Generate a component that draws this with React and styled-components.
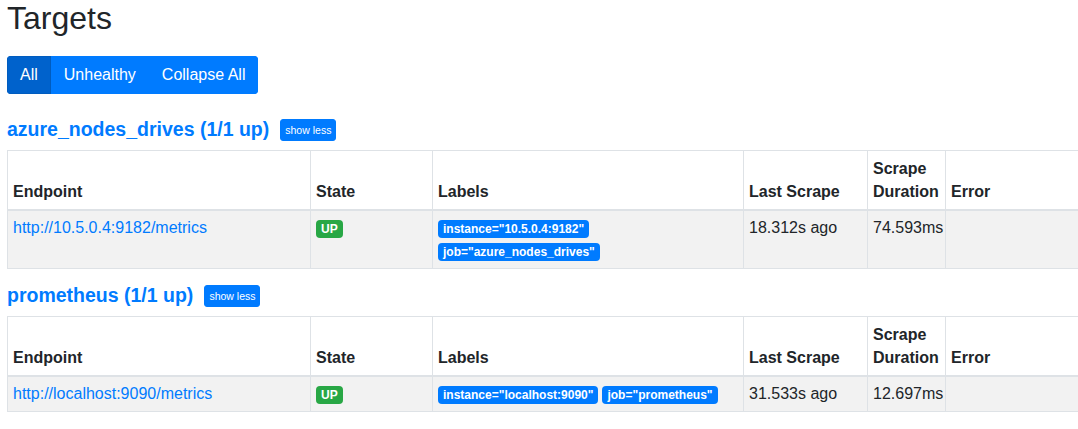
import React from "react";
import styled, { createGlobalStyle } from "styled-components";

const GlobalStyle = createGlobalStyle`
  html, body {
    margin: 0;
    padding: 0;
    background: #fff;
    overflow: hidden;
  }
  body {
    font-family: "Liberation Sans", Arial, sans-serif;
    font-size: 16px;
    line-height: 1.5;
    color: #212529;
  }
`;

const Page = styled.div`
  padding: 0 7px;
  width: 1200px;
`;

const Title = styled.h2`
  margin: 0 0 21px;
  padding-top: 1px;
  font-size: 32px;
  font-weight: 500;
  line-height: 34px;
  color: #212529;
`;

const ButtonGroup = styled.div`
  display: inline-flex;
  border-radius: 4px;
  overflow: hidden;
  margin-bottom: 24px;
`;

const GroupButton = styled.button`
  font: inherit;
  font-size: 16px;
  line-height: 24px;
  color: #fff;
  background: ${(p) => (p.$active ? "#0062cc" : "#007bff")};
  border: 1px solid ${(p) => (p.$active ? "#005cbf" : "#007bff")};
  padding: 6px 12px;
  height: 38px;
  cursor: pointer;
`;

const PoolHeader = styled.div`
  display: flex;
  align-items: center;
  gap: 11px;
  height: 24px;
  margin-bottom: 8px;
`;

const PoolName = styled.a`
  font-size: 19.5px;
  font-weight: 700;
  color: #007bff;
  text-decoration: none;
`;

const SmallButton = styled.button`
  font: inherit;
  font-size: 10.5px;
  line-height: 16px;
  color: #fff;
  background: #007bff;
  border: 1px solid #007bff;
  border-radius: 3px;
  padding: 2px 4px;
  cursor: pointer;
`;

const Table = styled.table`
  border-collapse: collapse;
  table-layout: fixed;
  width: 1160px;
  margin-bottom: 15px;
`;

const Col = styled.col`
  width: ${(p) => p.$w}px;
`;

const Th = styled.th`
  text-align: left;
  vertical-align: bottom;
  font-weight: 700;
  padding: 6px 5px 6px;
  border: 1px solid #dee2e6;
  border-bottom: 2px solid #dee2e6;
  line-height: 23px;
`;

const Row = styled.tr`
  background: ${(p) => (p.$striped ? "#f2f2f2" : "#fff")};
`;

const Td = styled.td`
  vertical-align: top;
  padding: 5px 5px 5px;
  border: 1px solid #dee2e6;
  line-height: 23px;
`;

const Endpoint = styled.a`
  color: #007bff;
  text-decoration: none;
`;

const Badge = styled.span`
  display: inline-block;
  font-size: 12px;
  font-weight: 700;
  line-height: 12px;
  padding: 3px 5px;
  border-radius: 4px;
  color: #fff;
  background: ${(p) => (p.$variant === "success" ? "#28a745" : "#007bff")};
  white-space: nowrap;
`;

const StateBadge = styled(Badge)`
  margin-top: 4px;
  vertical-align: top;
`;

const Labels = styled.div`
  display: flex;
  flex-wrap: wrap;
  gap: 5px 4px;
  padding: 4px 0 2px;
`;

const columns = [303, 122, 311, 124, 78, 222];

const pools = [
  {
    name: "azure_nodes_drives",
    endpoint: "http://10.5.0.4:9182/metrics",
    labels: ['instance="10.5.0.4:9182"', 'job="azure_nodes_drives"'],
    lastScrape: "18.312s ago",
    duration: "74.593ms",
  },
  {
    name: "prometheus",
    endpoint: "http://localhost:9090/metrics",
    labels: ['instance="localhost:9090"', 'job="prometheus"'],
    lastScrape: "31.533s ago",
    duration: "12.697ms",
  },
];

function Pool({ pool }) {
  return (
    <>
      <PoolHeader>
        <PoolName href="#">{pool.name} (1/1 up)</PoolName>
        <SmallButton>show less</SmallButton>
      </PoolHeader>
      <Table>
        <colgroup>
          {columns.map((w, i) => (
            <Col key={i} $w={w} />
          ))}
        </colgroup>
        <thead>
          <tr>
            <Th>Endpoint</Th>
            <Th>State</Th>
            <Th>Labels</Th>
            <Th>Last Scrape</Th>
            <Th>Scrape Duration</Th>
            <Th>Error</Th>
          </tr>
        </thead>
        <tbody>
          <Row $striped>
            <Td>
              <Endpoint href="#">{pool.endpoint}</Endpoint>
            </Td>
            <Td>
              <StateBadge $variant="success">UP</StateBadge>
            </Td>
            <Td>
              <Labels>
                {pool.labels.map((l) => (
                  <Badge key={l}>{l}</Badge>
                ))}
              </Labels>
            </Td>
            <Td>{pool.lastScrape}</Td>
            <Td>{pool.duration}</Td>
            <Td />
          </Row>
        </tbody>
      </Table>
    </>
  );
}

export default function App() {
  return (
    <>
      <GlobalStyle />
      <Page>
        <Title>Targets</Title>
        <ButtonGroup>
          <GroupButton $active>All</GroupButton>
          <GroupButton>Unhealthy</GroupButton>
          <GroupButton>Collapse All</GroupButton>
        </ButtonGroup>
        {pools.map((p) => (
          <Pool key={p.name} pool={p} />
        ))}
      </Page>
    </>
  );
}
